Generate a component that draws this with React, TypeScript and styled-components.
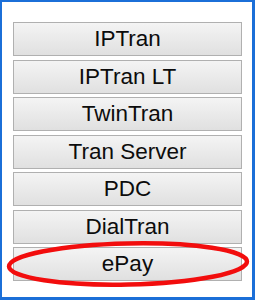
import React from "react";
import styled, { createGlobalStyle } from "styled-components";

const Global = createGlobalStyle`
  html, body { margin: 0; padding: 0; background: #ffffff; }
  body { font-family: "Liberation Sans", Arial, sans-serif; }
`;

const Frame = styled.div`
  position: relative;
  box-sizing: border-box;
  width: 255px;
  height: 300px;
  border-style: solid;
  border-color: #1b6fd8;
  border-width: 2px 3px 3px 2px;
  background: #ffffff;
  padding: 20px 0 0 11px;
`;

const List = styled.div`
  display: flex;
  flex-direction: column;
  gap: 3.5px;
  width: 229px;
`;

const Button = styled.div`
  box-sizing: border-box;
  height: 34px;
  display: flex;
  align-items: center;
  justify-content: center;
  border: 1px solid #b0b0b0;
  background: linear-gradient(#f4f4f4, #e0e0e0);
  color: #0c0c0c;
  font-size: 22.5px;
  line-height: 1;
  padding-top: 1px;
`;

const Highlight = styled.svg`
  position: absolute;
  left: 3px;
  top: 237px;
  overflow: visible;
  pointer-events: none;
`;

const items = ["IPTran", "IPTran LT", "TwinTran", "Tran Server", "PDC", "DialTran", "ePay"];

export default function App() {
  return (
    <>
      <Global />
      <Frame>
        <List>
          {items.map((t) => (
            <Button key={t}>{t}</Button>
          ))}
        </List>
        <Highlight width="245" height="50" viewBox="0 0 245 50">
          <ellipse
            cx="123"
            cy="25"
            rx="119"
            ry="20.5"
            fill="none"
            stroke="#f20d0d"
            strokeWidth="4.5"
            transform="rotate(-1.2 123 25)"
          />
        </Highlight>
      </Frame>
    </>
  );
}
